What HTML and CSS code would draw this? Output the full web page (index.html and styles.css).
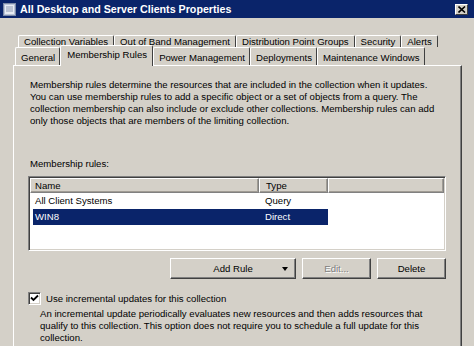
FILE: index.html
```html
<!DOCTYPE html>
<html lang="en">
<head>
    <meta charset="UTF-8"/>
    <title>All Desktop and Server Clients Properties</title>
    <link rel="stylesheet" href="styles.css">
</head>
<body>
<div class="window">
    <div class="titlebar">
        <svg class="title-icon" width="13" height="13" viewBox="0 0 13 13">
            <rect x="0.5" y="0.5" width="12" height="12" fill="#b9c4d8" stroke="#7d8aa6"/>
            <rect x="2" y="2" width="9" height="9" fill="#e8ecf3"/>
            <path d="M3 4h7M3 6h7M3 8h7" stroke="#8d99b3" stroke-width="1"/>
        </svg>
        <span class="title">All Desktop and Server Clients Properties</span>
        <div class="close">
            <svg width="8" height="7" viewBox="0 0 8 7">
                <path d="M0.5 0.5L7 6.5M7 0.5L0.5 6.5" stroke="#000" stroke-width="1.6"/>
            </svg>
        </div>
    </div>

    <div class="content">
        <div class="tab-row back">
            <div class="tab">Collection Variables</div>
            <div class="tab">Out of Band Management</div>
            <div class="tab">Distribution Point Groups</div>
            <div class="tab">Security</div>
            <div class="tab">Alerts</div>
        </div>
        <div class="tab-row front">
            <div class="tab">General</div>
            <div class="tab active">Membership Rules</div>
            <div class="tab">Power Management</div>
            <div class="tab">Deployments</div>
            <div class="tab">Maintenance Windows</div>
        </div>

        <div class="panel">
            <p class="intro">
                Membership rules determine the resources that are included in the collection when it updates.<br>
                You can use membership rules to add a specific object or a set of objects from a query. The<br>
                collection membership can also include or exclude other collections. Membership rules can add<br>
                only those objects that are members of the limiting collection.
            </p>

            <div class="list-label">Membership rules:</div>
            <div class="list">
                <div class="list-header">
                    <div class="col name">Name</div>
                    <div class="col type">Type</div>
                    <div class="col filler"></div>
                </div>
                <div class="row">
                    <div class="cell name">All Client Systems</div>
                    <div class="cell type">Query</div>
                </div>
                <div class="row selected">
                    <div class="cell name">WIN8</div>
                    <div class="cell type">Direct</div>
                </div>
            </div>

            <div class="buttons">
                <div class="btn add">Add Rule <span class="arrow"></span></div>
                <div class="btn disabled">Edit...</div>
                <div class="btn">Delete</div>
            </div>

            <div class="check-row">
                <div class="checkbox">
                    <svg width="9" height="9" viewBox="0 0 9 9">
                        <path d="M1 3.5L3.5 6L8 1.5" fill="none" stroke="#000" stroke-width="1.8"/>
                    </svg>
                </div>
                <span>Use incremental updates for this collection</span>
            </div>
            <p class="check-desc">
                An incremental update periodically evaluates new resources and then adds resources that<br>
                qualify to this collection. This option does not require you to schedule a full update for this<br>
                collection.
            </p>
        </div>
    </div>
</div>
</body>
</html>
```

FILE: styles.css
```css
body {
    margin: 0;
    padding: 0;
    background: #d4d0c8;
    font-family: "Liberation Sans", Arial, sans-serif;
    font-size: 9.6px;
    color: #000;
}

.window {
    width: 474px;
    height: 346px;
    overflow: hidden;
}

.titlebar {
    height: 18px;
    background: #0a246a;
    display: flex;
    align-items: center;
    padding: 0 6px 0 3px;
    gap: 4px;
}

.titlebar .title {
    flex: 1;
    color: #fff;
    font-weight: bold;
    font-size: 10.7px;
}

.close {
    width: 13px;
    height: 11px;
    box-sizing: border-box;
    background: #d4d0c8;
    border: 1px solid;
    border-color: #fff #404040 #404040 #fff;
    display: flex;
    align-items: center;
    justify-content: center;
}

.content {
    padding: 17px 12px 0 13px;
}

.tab-row {
    display: flex;
}

.tab-row.back {
    height: 12px;
    margin-left: 5px;
}

.tab-row.front {
    height: 18px;
    margin-left: 2px;
}

.tab {
    padding: 0 5px 0 5px;
    line-height: 11px;
    border-top: 1px solid #fff;
    border-left: 1px solid #fff;
    border-right: 1px solid #404040;
    border-radius: 2px 2px 0 0;
    white-space: nowrap;
}

.tab-row.front .tab {
    padding: 3px 4px 0 5px;
    line-height: 14px;
}

.tab-row.front .tab.active {
    position: relative;
    z-index: 1;
    margin: -2px 0 -1px;
    padding: 2px 5px 0 6px;
    background: #d4d0c8;
}

.panel {
    height: 290px;
    box-sizing: border-box;
    padding: 13px 15px 0 14px;
    border-top: 1px solid #fff;
    border-left: 1px solid #fff;
    border-right: 1px solid #404040;
    box-shadow: inset -1px 0 #808080;
}

.intro {
    margin: 0;
    padding-left: 2px;
    line-height: 12px;
}

.list-label {
    margin-top: 31px;
    padding-left: 2px;
    line-height: 12px;
}

.list {
    margin-top: 6px;
    height: 75px;
    box-sizing: border-box;
    background: #fff;
    border: 1px solid;
    border-color: #808080 #fff #fff #808080;
    box-shadow: inset 1px 1px #404040, inset -1px -1px #d4d0c8;
    padding: 1px;
}

.list-header {
    display: flex;
    height: 15px;
}

.col {
    box-sizing: border-box;
    background: #d4d0c8;
    border: 1px solid;
    border-color: #fff #808080 #808080 #fff;
    box-shadow: inset -1px -1px #a09c94;
    padding-left: 4px;
    line-height: 13px;
}

.col.name {
    width: 229px;
}

.col.type {
    width: 69px;
    padding-left: 6px;
}

.col.filler {
    flex: 1;
}

.row {
    display: flex;
    height: 16px;
    line-height: 16px;
    padding-left: 3px;
}

.cell {
    box-sizing: border-box;
}

.cell.name {
    width: 226px;
    padding-left: 2px;
}

.cell.type {
    width: 69px;
    padding-left: 6px;
}

.row.selected .cell {
    background: #0a246a;
    color: #fff;
}

.buttons {
    margin-top: 7px;
    display: flex;
    justify-content: flex-end;
    gap: 6px;
}

.btn {
    position: relative;
    width: 69px;
    height: 21px;
    box-sizing: border-box;
    border: 1px solid;
    border-color: #fff #404040 #404040 #fff;
    box-shadow: inset -1px -1px #808080;
    display: flex;
    align-items: center;
    justify-content: center;
}

.btn.add {
    width: 126px;
}

.btn .arrow {
    position: absolute;
    right: 7px;
    top: 8px;
    border-left: 3.5px solid transparent;
    border-right: 3.5px solid transparent;
    border-top: 4px solid #000;
}

.btn.disabled {
    color: #808080;
    text-shadow: 1px 1px #fff;
}

.check-row {
    margin-top: 13px;
    display: flex;
    align-items: center;
    gap: 5px;
}

.checkbox {
    width: 13px;
    height: 13px;
    box-sizing: border-box;
    background: #fff;
    border: 1px solid;
    border-color: #808080 #fff #fff #808080;
    box-shadow: inset 1px 1px #404040, inset -1px -1px #d4d0c8;
    display: flex;
    align-items: center;
    justify-content: center;
}

.check-desc {
    margin: 3px 0 0;
    padding-left: 12px;
    line-height: 12px;
}
```
